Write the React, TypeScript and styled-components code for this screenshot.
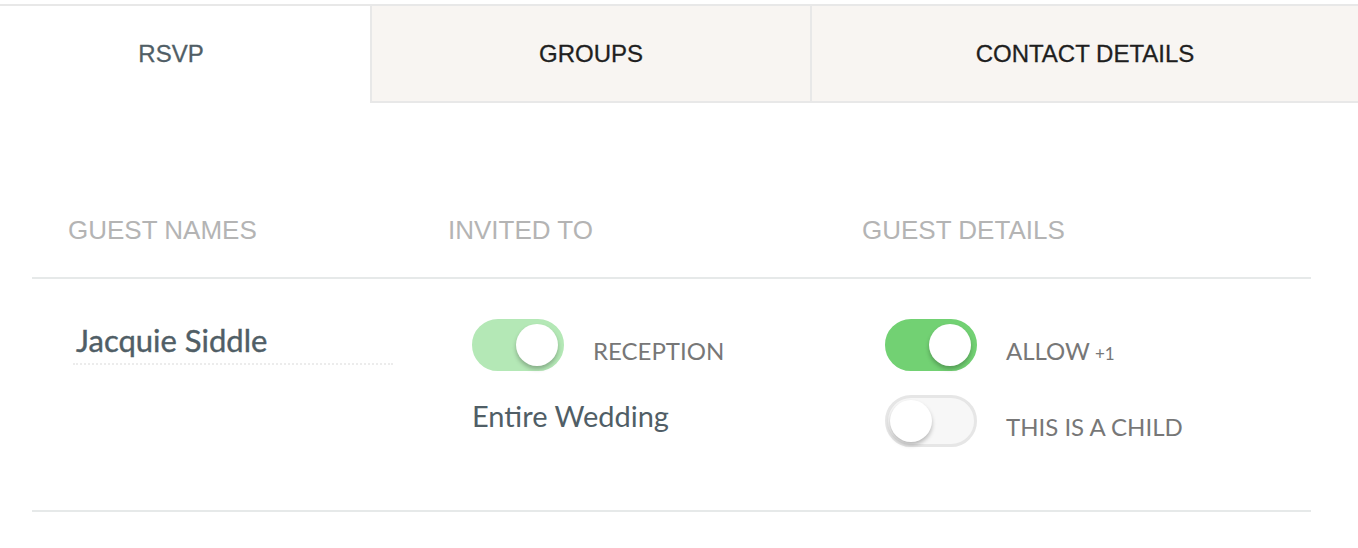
import React, { useState } from "react";
import styled, { createGlobalStyle } from "styled-components";

const GlobalStyle = createGlobalStyle`
  html, body { margin: 0; padding: 0; background: #fff; }
  body { font-family: "Liberation Sans", Arial, sans-serif; }
`;

const Page = styled.div`
  padding-top: 4px;
`;

const TabBar = styled.div`
  display: grid;
  grid-template-columns: 370px 440px 1fr;
  border-top: 2px solid #e8e8e8;
`;

const Tab = styled.div<{ $active?: boolean }>`
  height: 95px;
  display: flex;
  align-items: center;
  justify-content: center;
  padding-right: ${(p) => (p.$active ? "28px" : "0")};
  font-family: "Liberation Sans", Arial, sans-serif;
  font-size: 24px;
  -webkit-text-stroke: 0.3px currentColor;
  color: ${(p) => (p.$active ? "#505e66" : "#1f1f1f")};
  background: ${(p) => (p.$active ? "#fff" : "#f8f5f2")};
  border-bottom: 2px solid ${(p) => (p.$active ? "transparent" : "#e8e8e8")};
  border-left: ${(p) => (p.$active ? "none" : "2px solid #e8e8e8")};
  box-sizing: content-box;
`;

const Table = styled.div`
  margin: 106px 47px 0 32px;
`;

const Grid = styled.div`
  display: grid;
  grid-template-columns: 380px 414px 1fr;
`;

const HeadRow = styled(Grid)`
  height: 68px;
  border-bottom: 2px solid #e6e9e9;
`;

const HeadCell = styled.div`
  padding-left: 36px;
  padding-top: 6px;
  font-size: 26px;
  color: #b4b4b4;
`;

const BodyRow = styled(Grid)`
  height: 233px;
  border-bottom: 2px solid #e6e9e9;
  padding-top: 40px;
  box-sizing: border-box;
`;

const Cell = styled.div<{ $pad: number }>`
  padding-left: ${(p) => p.$pad}px;
  display: flex;
  flex-direction: column;
`;

const NameField = styled.div`
  width: 317px;
  padding: 2px 0 4px 3px;
  font-family: Lato, "Open Sans", sans-serif;
  font-size: 31px;
  -webkit-text-stroke: 0.4px currentColor;
  color: #505e66;
  border-bottom: 2px dotted #ececec;
`;

const OptionRow = styled.div`
  display: flex;
  align-items: center;
  gap: 29px;
  height: 52px;
  margin-bottom: 24px;
`;

const OptionLabel = styled.span`
  padding-top: 11px;
  font-family: Lato, "Open Sans", sans-serif;
  font-size: 24px;
  color: #777;
`;

const Small = styled.span`
  font-size: 17px;
  margin-left: 5px;
`;

const Scope = styled.div`
  font-family: Lato, "Open Sans", sans-serif;
  font-size: 29px;
  color: #505e66;
  margin-top: 3px;
`;

const Track = styled.button<{ $on: boolean; $tone: "light" | "strong" }>`
  position: relative;
  width: 92px;
  height: 52px;
  border-radius: 26px;
  padding: 0;
  cursor: pointer;
  box-sizing: border-box;
  border: 3px solid
    ${(p) => (p.$on ? (p.$tone === "light" ? "#b4e8b6" : "#72d173") : "#e6e6e6")};
  background: ${(p) =>
    p.$on ? (p.$tone === "light" ? "#b4e8b6" : "#72d173") : "#f7f7f7"};
`;

const Knob = styled.span<{ $on: boolean }>`
  position: absolute;
  top: 2px;
  left: ${(p) => (p.$on ? "41px" : "2px")};
  width: 42px;
  height: 42px;
  border-radius: 50%;
  background: #fff;
  box-shadow: 0 3px 4px rgba(0, 0, 0, 0.25);
`;

const Toggle: React.FC<{ initial: boolean; tone?: "light" | "strong" }> = ({
  initial,
  tone = "strong",
}) => {
  const [on, setOn] = useState(initial);
  return (
    <Track $on={on} $tone={tone} onClick={() => setOn(!on)}>
      <Knob $on={on} />
    </Track>
  );
};

const App: React.FC = () => {
  return (
    <Page>
      <GlobalStyle />
      <TabBar>
        <Tab $active>RSVP</Tab>
        <Tab>GROUPS</Tab>
        <Tab>CONTACT DETAILS</Tab>
      </TabBar>
      <Table>
        <HeadRow>
          <HeadCell>GUEST NAMES</HeadCell>
          <HeadCell>INVITED TO</HeadCell>
          <HeadCell>GUEST DETAILS</HeadCell>
        </HeadRow>
        <BodyRow>
          <Cell $pad={41}>
            <NameField>Jacquie Siddle</NameField>
          </Cell>
          <Cell $pad={60}>
            <OptionRow>
              <Toggle initial tone="light" />
              <OptionLabel>RECEPTION</OptionLabel>
            </OptionRow>
            <Scope>Entire Wedding</Scope>
          </Cell>
          <Cell $pad={59}>
            <OptionRow>
              <Toggle initial />
              <OptionLabel>
                ALLOW<Small>+1</Small>
              </OptionLabel>
            </OptionRow>
            <OptionRow>
              <Toggle initial={false} />
              <OptionLabel>THIS IS A CHILD</OptionLabel>
            </OptionRow>
          </Cell>
        </BodyRow>
      </Table>
    </Page>
  );
};

export default App;
